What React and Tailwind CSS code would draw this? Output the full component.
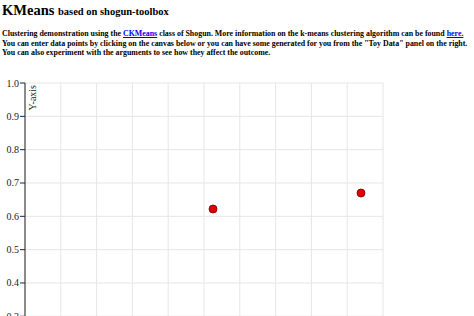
import React from 'react'

const ticks = [1.0, 0.9, 0.8, 0.7, 0.6, 0.5, 0.4, 0.3]
const cols = [0, 1, 2, 3, 4, 5, 6, 7, 8, 9, 10]
const points = [
    { x: 213, y: 139 },
    { x: 361, y: 123 },
]

function Chart() {
    const left = 25
    const right = 383
    const top = 13
    const step = 33.33
    const colStep = (right - left) / 10

    return (
        <svg width="474" height="246" viewBox="0 0 474 246" className="block" style={{ fontFamily: '"Liberation Serif", "Times New Roman", serif' }}>
            {/* grid */}
            {ticks.map((t, i) => (
                <line key={'h' + i} x1={left} x2={right} y1={top + i * step} y2={top + i * step} stroke="#e6e6e6" strokeWidth="1" />
            ))}
            {cols.map((c) => (
                <line key={'v' + c} x1={left + c * colStep} x2={left + c * colStep} y1={top} y2={246} stroke="#e6e6e6" strokeWidth="1" />
            ))}
            {/* y axis */}
            <line x1={left} x2={left} y1={top} y2={246} stroke="#222" strokeWidth="1" />
            {ticks.map((t, i) => (
                <g key={'t' + i}>
                    <line x1={left - 5} x2={left} y1={top + i * step} y2={top + i * step} stroke="#222" strokeWidth="1" />
                    <text x={left - 6} y={top + i * step + 3.5} textAnchor="end" fontSize="10" fill="#222">
                        {t.toFixed(1)}
                    </text>
                </g>
            ))}
            <g transform="translate(36 15)">
                <text transform="rotate(-90)" textAnchor="end" fontSize="10" fill="#222">
                    Y-axis
                </text>
            </g>
            {points.map((p, i) => (
                <circle key={i} cx={p.x} cy={p.y} r="4" fill="#e00000" stroke="#7a0000" strokeWidth="0.8" />
            ))}
        </svg>
    )
}

export default function App() {
    return (
        <div className="bg-white w-[474px] h-[316px] overflow-hidden text-black" style={{ fontFamily: '"Liberation Serif", "Times New Roman", serif' }}>
            <div className="h-[29px] pl-[2px] pt-[1px]">
                <h1 className="font-bold text-[14.5px] leading-[18px]">
                    KMeans <span className="text-[10.5px]">based on shogun-toolbox</span>
                </h1>
            </div>
            <p className="h-[41px] pl-[2px] font-bold text-[7.9px] leading-[9.5px] whitespace-nowrap">
                Clustering demonstration using the <a href="#" className="text-[#0000ee] underline">CKMeans</a> class of Shogun. More information on the k-means clustering algorithm can be found <a href="#" className="text-[#0000ee] underline">here.</a>
                <br />
                You can enter data points by clicking on the canvas below or you can have some generated for you from the "Toy Data" panel on the right.
                <br />
                You can also experiment with the arguments to see how they affect the outcome.
            </p>
            <Chart />
        </div>
    )
}
